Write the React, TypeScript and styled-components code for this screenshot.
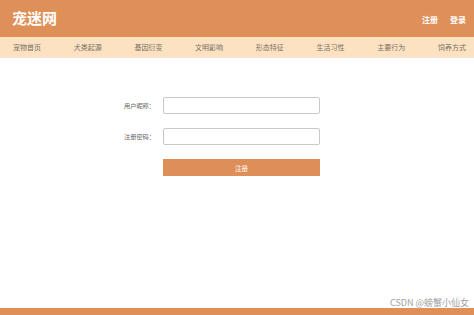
import styled, { createGlobalStyle } from "styled-components";

const GlobalStyle = createGlobalStyle`
    html, body {
        margin: 0;
        padding: 0;
        height: 100%;
        background: #ffffff;
        font-family: "Noto Sans CJK SC", "Noto Sans", sans-serif;
    }
    #root {
        height: 100%;
    }
    * {
        box-sizing: border-box;
    }
`;

const navItems = ["宠物首页", "犬类起源", "基因衍变", "文明影响", "形态特征", "生活习性", "主要行为", "饲养方式"];

const App = () => {
    return (
        <>
            <GlobalStyle />
            <StyledPage>
                <StyledHeader>
                    <StyledLogo>宠迷网</StyledLogo>
                    <StyledUserLinks>
                        <StyledUserLink href="#">注册</StyledUserLink>
                        <StyledUserLink href="#">登录</StyledUserLink>
                    </StyledUserLinks>
                </StyledHeader>
                <StyledNav>
                    {navItems.map((item) => (
                        <StyledNavItem key={item} href="#">{item}</StyledNavItem>
                    ))}
                </StyledNav>
                <StyledMain>
                    <StyledForm onSubmit={(e) => e.preventDefault()}>
                        <StyledLabel>用户昵称：</StyledLabel>
                        <StyledInput type="text" />
                        <StyledLabel>注册密码：</StyledLabel>
                        <StyledInput type="password" />
                        <span />
                        <StyledButton type="submit">注册</StyledButton>
                    </StyledForm>
                </StyledMain>
                <StyledFooter />
                <StyledWatermark>CSDN @螃蟹小仙女</StyledWatermark>
            </StyledPage>
        </>
    );
};

const StyledPage = styled.div`
    position: relative;
    display: flex;
    flex-direction: column;
    min-height: 100%;
`;

const StyledHeader = styled.header`
    height: 37px;
    background: #df9059;
    display: flex;
    align-items: center;
    justify-content: space-between;
    padding: 0 8px 0 12px;
`;

const StyledLogo = styled.h1`
    margin: 0;
    font-size: 15px;
    font-weight: 700;
    color: #ffffff;
    letter-spacing: 0px;
    line-height: 1;
    margin-top: -3px;
`;

const StyledUserLinks = styled.div`
    display: flex;
    gap: 12px;
    margin-top: 1px;
`;

const StyledUserLink = styled.a`
    font-size: 8px;
    font-weight: 700;
    color: #ffffff;
    text-decoration: none;
`;

const StyledNav = styled.nav`
    height: 21px;
    background: #fde2c1;
    border-bottom: 1px solid #f3e6d8;
    display: flex;
    align-items: center;
    justify-content: space-between;
    padding: 0 8px 0 13px;
`;

const StyledNavItem = styled.a`
    font-size: 7px;
    color: #7a7068;
    text-decoration: none;
    line-height: 1;
`;

const StyledMain = styled.main`
    flex: 1;
    padding: 39px 0 0 124px;
`;

const StyledForm = styled.form`
    display: grid;
    grid-template-columns: 31px 157px;
    column-gap: 8px;
    row-gap: 14px;
    align-items: center;
`;

const StyledLabel = styled.label`
    font-size: 6.2px;
    color: #666666;
    white-space: nowrap;
    text-align: right;
`;

const StyledInput = styled.input`
    height: 17px;
    border: 1px solid #c8c8c8;
    border-radius: 2px;
    padding: 0 4px;
    outline: none;
    background: #ffffff;
`;

const StyledButton = styled.button`
    height: 17px;
    border: none;
    background: #de8e57;
    color: #ffffff;
    font-family: inherit;
    font-size: 6.5px;
    cursor: pointer;
    padding: 0;
`;

const StyledFooter = styled.footer`
    height: 7px;
    background: #df9059;
`;

const StyledWatermark = styled.div`
    position: absolute;
    right: 5px;
    bottom: 7px;
    font-size: 9px;
    color: #a0a0a0;
    text-shadow: 0 0 2px #ffffff;
    line-height: 1.1;
`;

export default App;
